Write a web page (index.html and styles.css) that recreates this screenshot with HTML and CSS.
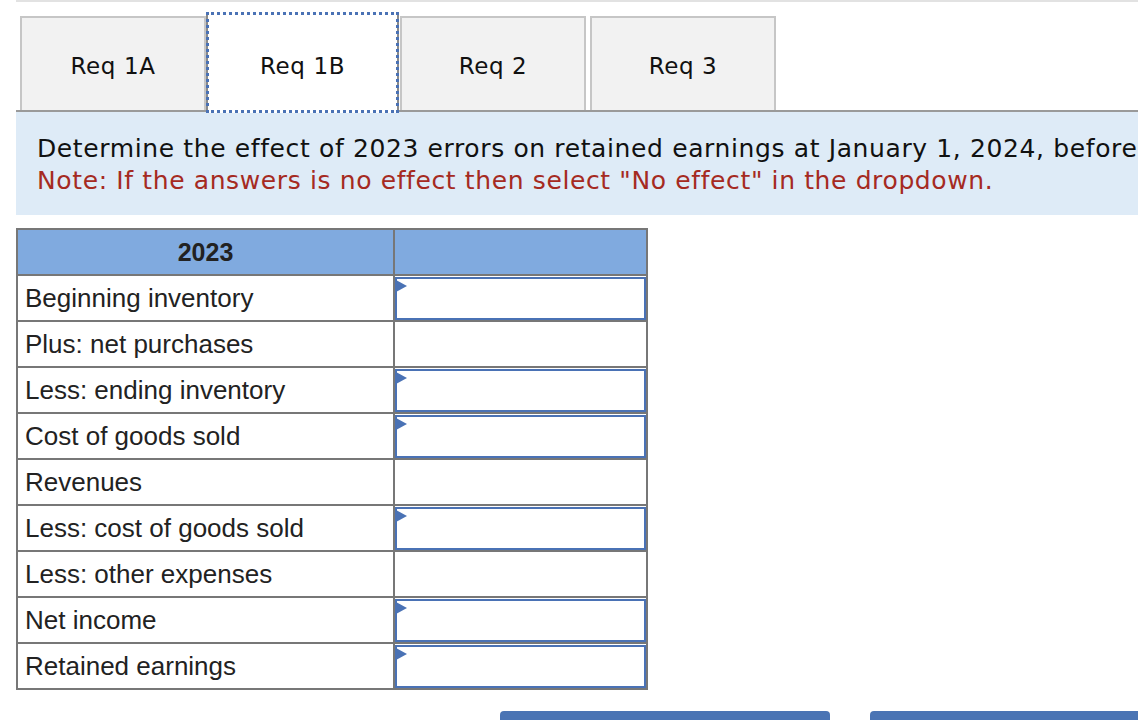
FILE: index.html
```html
<!DOCTYPE html>
<html lang="en">
<head>
<meta charset="utf-8">
<title>Req 1B</title>
<link rel="stylesheet" href="styles.css">
</head>
<body>
<div class="page">
  <div class="topline"></div>
  <div class="tabs">
    <div class="tab tab-first">Req 1A</div>
    <div class="tab tab-active">Req 1B</div>
    <div class="tab tab-third">Req 2</div>
    <div class="tab tab-fourth">Req 3</div>
  </div>
  <div class="instructions">
    <div class="prompt">Determine the effect of 2023 errors on retained earnings at January 1, 2024, before</div>
    <div class="note">Note: If the answers is no effect then select "No effect" in the dropdown.</div>
  </div>
  <table class="grid">
    <thead>
      <tr><th class="label-head">2023</th><th class="value-head"></th></tr>
    </thead>
    <tbody>
      <tr><td class="label">Beginning inventory</td><td class="value"><div class="select"></div></td></tr>
      <tr><td class="label">Plus: net purchases</td><td class="value"></td></tr>
      <tr><td class="label">Less: ending inventory</td><td class="value"><div class="select"></div></td></tr>
      <tr><td class="label">Cost of goods sold</td><td class="value"><div class="select"></div></td></tr>
      <tr><td class="label">Revenues</td><td class="value"></td></tr>
      <tr><td class="label">Less: cost of goods sold</td><td class="value"><div class="select"></div></td></tr>
      <tr><td class="label">Less: other expenses</td><td class="value"></td></tr>
      <tr><td class="label">Net income</td><td class="value"><div class="select"></div></td></tr>
      <tr><td class="label">Retained earnings</td><td class="value"><div class="select"></div></td></tr>
    </tbody>
  </table>
  <div class="nav">
    <div class="nav-btn"></div>
    <div class="nav-btn"></div>
  </div>
</div>
</body>
</html>
```
FILE: styles.css
```css
html, body {
  margin: 0;
  padding: 0;
  overflow: hidden;
  background: #ffffff;
}
.page {
  width: 1138px;
  height: 720px;
  overflow: hidden;
}
.topline {
  height: 2px;
  margin-left: 16px;
  background: #e2e2e2;
}
.tabs {
  display: flex;
  align-items: flex-end;
  margin: 14px 0 0 16px;
  padding-left: 4px;
  height: 94px;
  border-bottom: 2px solid #9a9a9a;
  font-family: "DejaVu Sans", Verdana, sans-serif;
  font-size: 23px;
  letter-spacing: 0.6px;
  color: #111;
}
.tab {
  box-sizing: border-box;
  width: 186px;
  height: 94px;
  display: flex;
  align-items: center;
  justify-content: center;
  background: #f2f2f2;
  border: 2px solid #c6c6c6;
  border-bottom: none;
  padding-top: 4px;
}
.tab-active {
  width: 193px;
  height: 101px;
  margin-bottom: -3px;
  background: #ffffff;
  border: 2px solid #8a8a8a;
  border-top: none;
  border-bottom: none;
  outline: 3px dotted #4a72b5;
  outline-offset: -3px;
  padding-top: 7px;
}
.tab-third {
  margin-left: 1px;
}
.tab-fourth {
  margin-left: 4px;
}
.instructions {
  margin-left: 16px;
  height: 103px;
  box-sizing: border-box;
  padding: 21px 0 0 21px;
  background: #deebf7;
  font-family: "DejaVu Sans", Verdana, sans-serif;
  font-size: 25px;
  letter-spacing: 0.62px;
  line-height: 32px;
  white-space: nowrap;
  overflow: hidden;
}
.prompt {
  color: #111;
}
.note {
  color: #a52a22;
}
.grid {
  margin: 13px 0 0 16px;
  border-collapse: collapse;
  border: 2px solid #777;
  font-family: "Liberation Sans", Arial, sans-serif;
  font-size: 26px;
  color: #222;
}
.grid th, .grid td {
  border: 2px solid #777;
  height: 44px;
  padding: 0;
}
.grid th {
  background: #80aadf;
  font-weight: bold;
  font-size: 25px;
  text-align: center;
}
.label-head {
  width: 375px;
}
.value-head {
  width: 251px;
}
.label {
  padding-left: 7px !important;
  text-align: left;
}
.value {
  vertical-align: top;
}
.select {
  position: relative;
  box-sizing: border-box;
  height: 43px;
  margin-top: 1px;
  border: 2px solid #4a72b5;
  background: #fff;
}
.select::before {
  content: "";
  position: absolute;
  left: -1px;
  top: 1px;
  border-style: solid;
  border-width: 6px 0 6px 11px;
  border-color: transparent transparent transparent #4a72b5;
}
.nav {
  display: flex;
  gap: 40px;
  margin: 21px 0 0 500px;
}
.nav-btn {
  flex: none;
  width: 330px;
  height: 44px;
  background: #4a74b4;
  border-radius: 4px 4px 0 0;
}
```
